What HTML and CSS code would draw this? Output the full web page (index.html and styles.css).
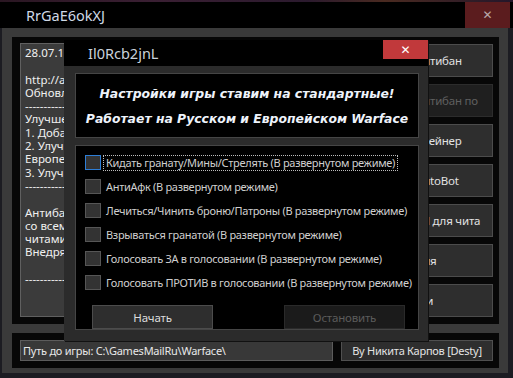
FILE: index.html
```html
<!DOCTYPE html>
<html lang="ru">
<head>
<meta charset="utf-8">
<title>RrGaE6okXJ</title>
<link rel="stylesheet" href="styles.css">
</head>
<body>
<div class="window">
  <div class="topstrip"></div>
  <div class="titlebar">
    <span class="title">RrGaE6okXJ</span>
    <span class="close close-main">✕</span>
  </div>
  <div class="frame">
    <div class="upper">
      <div class="news">
        <div>28.07.17 - Обновление</div>
        <div>&nbsp;</div>
        <div>http://adminsoft.ru</div>
        <div>Обновление чита</div>
        <div>----------------------------------------</div>
        <div>Улучшения:</div>
        <div>1. Добавлен АнтиАфк</div>
        <div>2. Улучшена работа на</div>
        <div>Европейском Warface</div>
        <div>3. Улучшен AutoBot</div>
        <div>----------------------------------------</div>
        <div>&nbsp;</div>
        <div>Антибан работает</div>
        <div>со всеми</div>
        <div>читами.</div>
        <div>Внедряйте</div>
        <div>&nbsp;</div>
        <div>----------------------------------------</div>
      </div>
      <div class="side">
        <div class="sbtn">Антибан</div>
        <div class="sbtn disabled">Антибан по</div>
        <div class="sbtn">Трейнер</div>
        <div class="sbtn">AutoBot</div>
        <div class="sbtn">Dll для чита</div>
        <div class="sbtn">Сия</div>
        <div class="sbtn">Ми</div>
      </div>
    </div>
    <div class="lower">
      <div class="path">Путь до игры: C:\GamesMailRu\Warface\</div>
      <div class="author">By Никита Карпов [Desty]</div>
    </div>
  </div>

  <div class="dialog">
    <div class="dtitlebar">
      <span class="dtitle">Il0Rcb2jnL</span>
      <span class="close close-dlg">✕</span>
    </div>
    <div class="dbody">
      <div class="banner">
        <div>Настройки игры ставим на стандартные!</div>
        <div>Работает на Русском и Европейском Warface</div>
      </div>
      <div class="options">
        <label class="opt focused"><span class="cb active"></span><span class="lbl">Кидать гранату/Мины/Стрелять (В развернутом режиме)</span></label>
        <label class="opt"><span class="cb"></span><span class="lbl">АнтиАфк (В развернутом режиме)</span></label>
        <label class="opt"><span class="cb"></span><span class="lbl">Лечиться/Чинить броню/Патроны (В развернутом режиме)</span></label>
        <label class="opt"><span class="cb"></span><span class="lbl">Взрываться гранатой (В развернутом режиме)</span></label>
        <label class="opt"><span class="cb"></span><span class="lbl">Голосовать ЗА в голосовании (В развернутом режиме)</span></label>
        <label class="opt"><span class="cb"></span><span class="lbl">Голосовать ПРОТИВ в голосовании (В развернутом режиме)</span></label>
        <div class="actions">
          <div class="dbtn">Начать</div>
          <div class="dbtn off">Остановить</div>
        </div>
      </div>
    </div>
  </div>
</div>
</body>
</html>
```
FILE: styles.css
```css
* { box-sizing: border-box; }
html, body { margin: 0; padding: 0; }
body {
  background: #1a1a1e;
  font-family: "Noto Sans", "Open Sans", sans-serif;
  width: 513px;
  height: 378px;
  overflow: hidden;
}
.window {
  position: relative;
  width: 513px;
  height: 378px;
  background: #1c1c22;
}
.topstrip {
  height: 2px;
  background: linear-gradient(90deg, #2a1622, #3a1f33 30%, #2b1a2e 60%, #4a2a20 75%, #24162a);
}
.titlebar {
  height: 26px;
  background: #000;
  display: flex;
  align-items: center;
  justify-content: space-between;
}
.title {
  padding-left: 26px;
  color: #cfd9e6;
  font-size: 14.5px;
  line-height: 1;
}
.close {
  display: flex;
  align-items: center;
  justify-content: center;
  font-family: "DejaVu Sans", sans-serif;
}
.close-main {
  width: 45px;
  height: 26px;
  margin-right: 3px;
  background: #5b1c1e;
  color: #b9a9aa;
  font-size: 12px;
}
.frame {
  margin: 0 5px 0 2px;
  background: #3a3a3a;
  padding: 9px 9px 5px 10px;
}
.upper {
  background: #070707;
  height: 287px;
  padding: 6px 6px 7px 8px;
  display: flex;
  gap: 6px;
}
.news {
  flex: 1;
  background: #3b3b3b;
  border: 1px solid #606060;
  color: #f0f0f0;
  font-size: 11.5px;
  line-height: 13.3px;
  padding: 2px 4px;
  overflow: hidden;
  white-space: nowrap;
}
.side {
  width: 92px;
  display: flex;
  flex-direction: column;
  gap: 7px;
  padding-top: 1px;
}
.sbtn {
  height: 33px;
  background: #2e2e2e;
  border: 1px solid #4c4c4c;
  color: #e2e2e2;
  font-size: 11.5px;
  letter-spacing: -0.2px;
  display: flex;
  align-items: center;
  padding-left: 14px;
  white-space: nowrap;
  overflow: hidden;
}
.sbtn.disabled {
  background: #1f1f1f;
  border-color: #2c2c2c;
  color: #5f5f5f;
}
.lower {
  margin-top: 9px;
  background: #070707;
  height: 35px;
  padding: 7px 6px 7px 8px;
  display: flex;
  gap: 8px;
}
.path {
  width: 313px;
  background: #383838;
  border: 1px solid #5c5c5c;
  color: #e8e8e8;
  font-size: 11px;
  letter-spacing: -0.25px;
  display: flex;
  align-items: center;
  padding-left: 2px;
  white-space: nowrap;
}
.author {
  flex: 1;
  background: #2e2e2e;
  border: 1px solid #505050;
  color: #e4e4e4;
  font-size: 11px;
  letter-spacing: -0.25px;
  display: flex;
  align-items: center;
  justify-content: center;
  white-space: nowrap;
}

/* dialog window floating over the main window */
.dialog {
  position: absolute;
  left: 64px;
  top: 40px;
  width: 364px;
  height: 301px;
  background: #2b2b2b;
  box-shadow: 1px 1px 0 #111;
}
.dtitlebar {
  height: 26px;
  background: #000;
  display: flex;
  align-items: flex-start;
  justify-content: space-between;
}
.dtitle {
  padding-left: 24px;
  padding-top: 5px;
  color: #c9d2dc;
  font-size: 14.5px;
  line-height: 16px;
}
.close-dlg {
  width: 45px;
  height: 19px;
  background: #c1393b;
  color: #ffffff;
  font-size: 12px;
}
.dbody {
  padding: 7px 9px 11px 11px;
  display: flex;
  flex-direction: column;
  gap: 7px;
  height: 275px;
}
.banner {
  height: 66px;
  background: #000;
  border: 1px solid #454545;
  color: #eef3fb;
  font-family: "DejaVu Sans", sans-serif;
  font-style: italic;
  font-weight: bold;
  font-size: 12.4px;
  text-align: center;
  display: flex;
  flex-direction: column;
  justify-content: center;
  gap: 9px;
  line-height: 16px;
  padding-top: 1px;
}
.options {
  flex: 1;
  background: #000;
  border: 1px solid #454545;
  padding: 9px 8px 0 9px;
  display: flex;
  flex-direction: column;
  gap: 9px;
}
.opt {
  display: flex;
  align-items: center;
  gap: 3px;
  height: 15px;
  color: #cfcfcf;
  font-size: 11px;
  letter-spacing: -0.3px;
  white-space: nowrap;
}
.cb {
  width: 16px;
  height: 15px;
  background: #333;
  border: 1px solid #565656;
  flex: none;
}
.cb.active { border-color: #2e7ed6; }
.lbl {
  padding: 0 2px;
  line-height: 14px;
}
.focused .lbl { outline: 1px dotted #bdbdbd; }
.actions {
  display: flex;
  gap: 71px;
  padding-left: 7px;
  margin-top: 6px;
}
.dbtn {
  width: 121px;
  height: 24px;
  background: #2e2e2e;
  border: 1px solid #4c4c4c;
  color: #dedede;
  font-size: 11.5px;
  letter-spacing: -0.2px;
  display: flex;
  align-items: center;
  justify-content: center;
}
.dbtn.off {
  background: #1b1b1b;
  border-color: #2a2a2a;
  color: #5c5c5c;
}
```
